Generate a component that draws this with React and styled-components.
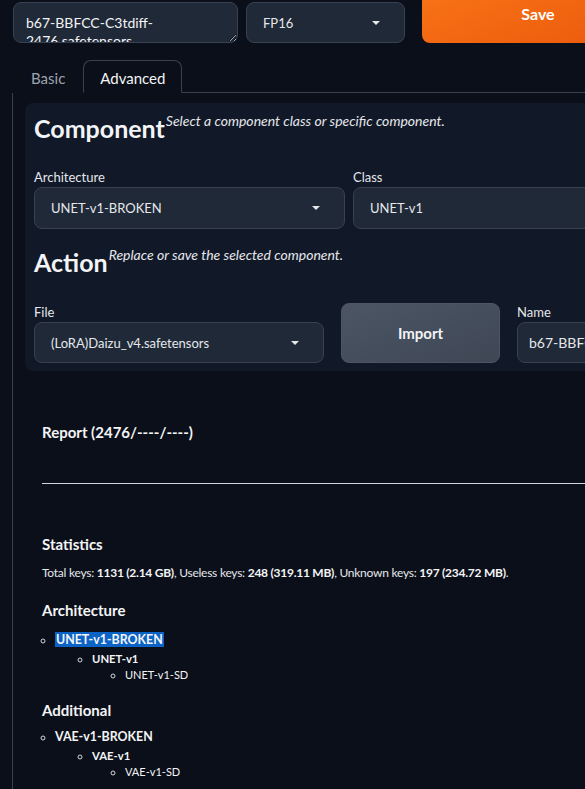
import React from 'react';
import styled, { createGlobalStyle } from 'styled-components';

const GlobalStyle = createGlobalStyle`
  html, body {
    margin: 0;
    padding: 0;
    background: #0b0f19;
    overflow: hidden;
  }
  body {
    font-family: Lato, "Noto Sans", sans-serif;
    color: #f3f4f6;
  }
`;

const Page = styled.div`
  width: 720px;
  padding-top: 2px;
`;

const TopRow = styled.div`
  display: flex;
  align-items: flex-start;
  padding-left: 13px;
`;

const NameArea = styled.textarea`
  box-sizing: border-box;
  width: 225px;
  height: 41px;
  margin: 0 8px 0 0;
  padding: 11px 12px 0 12px;
  background: #1f2937;
  border: 1px solid #374151;
  border-radius: 8px;
  color: #f3f4f6;
  font-family: inherit;
  font-size: 14px;
  line-height: 18px;
  overflow: hidden;
  resize: vertical;
  outline: none;
`;

const Select = styled.div`
  box-sizing: border-box;
  display: flex;
  align-items: center;
  justify-content: space-between;
  flex: none;
  width: ${(p) => (p.$w ? `${p.$w}px` : '100%')};
  height: ${(p) => p.$h || 42}px;
  padding: 0 ${(p) => (p.$caret ? 24 : 16)}px 0 ${(p) => (p.$text ? 11 : 16)}px;
  background: #1f2937;
  border: 1px solid #374151;
  border-radius: 8px;
  color: #e5e7eb;
  font-size: ${(p) => (p.$text ? 14 : 13)}px;
  white-space: nowrap;
  overflow: hidden;
`;

const Caret = () => (
  <svg width="8" height="4" viewBox="0 0 8 4">
    <path d="M0 0 H8 L4 4 Z" fill="#e5e7eb" />
  </svg>
);

const SaveButton = styled.button`
  flex: none;
  width: 232px;
  height: 51px;
  margin: -10px 0 0 17px;
  padding: 0 0 8px 0;
  border: none;
  border-radius: 8px;
  background: linear-gradient(160deg, #f97316, #ea580c);
  color: #fff;
  font-family: inherit;
  font-size: 16px;
  font-weight: 700;
`;

const TabBar = styled.div`
  display: flex;
  margin: 17px 0 0 12px;
  border-bottom: 1px solid #374151;
`;

const Tab = styled.div`
  box-sizing: border-box;
  height: 33px;
  padding: 2px ${(p) => (p.$active ? 16 : 17)}px 0 ${(p) => (p.$active ? 16 : 18)}px;
  display: flex;
  align-items: center;
  font-size: 15px;
  color: ${(p) => (p.$active ? '#f3f4f6' : '#9ca3af')};
  border: 1px solid ${(p) => (p.$active ? '#374151' : 'transparent')};
  border-bottom-color: ${(p) => (p.$active ? '#0b0f19' : 'transparent')};
  border-radius: 8px 8px 0 0;
  margin-bottom: -1px;
  background: #0b0f19;
`;

const TabPanel = styled.div`
  margin-left: 12px;
  border-left: 1px solid #374151;
  padding: 10px 0 40px 12px;
`;

const Group = styled.div`
  background: #111827;
  border-radius: 8px;
  padding: 7px 9px 8px 9px;
`;

const Heading = styled.div`
  display: flex;
  align-items: flex-start;
  margin-top: ${(p) => p.$mt || 0}px;
`;

const HeadingText = styled.span`
  font-size: 25px;
  font-weight: 700;
  line-height: 36px;
`;

const Note = styled.span`
  margin: 1px 0 0 1px;
  font-size: 14px;
  line-height: 20px;
  font-style: italic;
  color: #e5e7eb;
`;

const FieldRow = styled.div`
  display: flex;
  align-items: flex-start;
  margin-top: ${(p) => p.$mt || 0}px;
`;

const Field = styled.div`
  display: flex;
  flex-direction: column;
  width: ${(p) => (p.$w ? `${p.$w}px` : 'auto')};
  flex: ${(p) => (p.$w ? 'none' : '1')};
  min-width: 0;
  margin-right: ${(p) => p.$mr || 0}px;
`;

const Label = styled.div`
  font-size: 13px;
  line-height: 18px;
  color: #e5e7eb;
  margin-bottom: 1px;
`;

const ImportButton = styled.button`
  flex: none;
  width: 159px;
  height: 60px;
  margin-right: 17px;
  border: 1px solid #4b5563;
  border-radius: 8px;
  background: linear-gradient(160deg, #4b5563, #3f4755);
  color: #f3f4f6;
  font-family: inherit;
  font-size: 15px;
  font-weight: 700;
`;

const Report = styled.div`
  padding-left: 17px;
  margin-top: 51px;
`;

const Title = styled.div`
  font-size: 15px;
  font-weight: 700;
  line-height: 20px;
  margin-top: ${(p) => p.$mt || 0}px;
`;

const Rule = styled.hr`
  border: none;
  border-top: 1px solid #d1d5db;
  margin: 41px 0 0 0;
`;

const Stats = styled.p`
  margin: 9px 0 0 0;
  font-size: 12px;
  letter-spacing: -0.25px;
  line-height: 20px;
  color: #e5e7eb;
  b {
    font-weight: 700;
    color: #f3f4f6;
  }
`;

const Tree = styled.ul`
  margin: ${(p) => p.$mt || 0}px 0 0 0;
  padding-left: ${(p) => p.$indent}px;
  list-style: circle;
  font-size: ${(p) => p.$size}px;
  font-weight: ${(p) => p.$weight || 700};
  line-height: ${(p) => p.$lh}px;
  li::marker {
    font-size: 11px;
    color: #d1d5db;
  }
`;

const Highlight = styled.span`
  background: #0b63c6;
  padding: 0 1px;
`;

const Hierarchy = ({ top, mid, low, selected, mt }) => (
  <Tree $indent={13} $size={12.4} $lh={20} $mt={mt}>
    <li>
      {selected ? <Highlight>{top}</Highlight> : top}
      <Tree $indent={37} $size={11.3} $lh={18}>
        <li>
          {mid}
          <Tree $indent={33} $size={11} $lh={14} $weight={400}>
            <li>{low}</li>
          </Tree>
        </li>
      </Tree>
    </li>
  </Tree>
);

const App = () => {
  return (
    <Page>
      <GlobalStyle />
      <TopRow>
        <NameArea readOnly value="b67-BBFCC-C3tdiff-2476.safetensors" />
        <Select $w={159} $h={41} $caret>
          FP16 <Caret />
        </Select>
        <SaveButton>Save</SaveButton>
      </TopRow>

      <TabBar>
        <Tab>Basic</Tab>
        <Tab $active>Advanced</Tab>
      </TabBar>

      <TabPanel>
        <Group>
          <Heading>
            <HeadingText>Component</HeadingText>
            <Note>Select a component class or specific component.</Note>
          </Heading>
          <FieldRow $mt={22}>
            <Field $w={311} $mr={8}>
              <Label>Architecture</Label>
              <Select $caret>
                UNET-v1-BROKEN <Caret />
              </Select>
            </Field>
            <Field>
              <Label>Class</Label>
              <Select>UNET-v1</Select>
            </Field>
          </FieldRow>

          <Heading $mt={15}>
            <HeadingText>Action</HeadingText>
            <Note>Replace or save the selected component.</Note>
          </Heading>
          <FieldRow $mt={23}>
            <Field $w={290} $mr={17}>
              <Label>File</Label>
              <Select $h={41} $caret>
                (LoRA)Daizu_v4.safetensors <Caret />
              </Select>
            </Field>
            <ImportButton>Import</ImportButton>
            <Field>
              <Label>Name</Label>
              <Select $h={41} $text>
                b67-BBFCC-C3tdiff-2476.safetensors
              </Select>
            </Field>
          </FieldRow>
        </Group>

        <Report>
          <Title>Report (2476/----/----)</Title>
          <Rule />
          <Title $mt={50}>Statistics</Title>
          <Stats>
            Total keys: <b>1131 (2.14 GB)</b>, Useless keys: <b>248 (319.11 MB)</b>, Unknown
            keys: <b>197 (234.72 MB)</b>.
          </Stats>
          <Title $mt={17}>Architecture</Title>
          <Hierarchy top="UNET-v1-BROKEN" mid="UNET-v1" low="UNET-v1-SD" selected mt={10} />
          <Title $mt={18}>Additional</Title>
          <Hierarchy top="VAE-v1-BROKEN" mid="VAE-v1" low="VAE-v1-SD" mt={7} />
        </Report>
      </TabPanel>
    </Page>
  );
};

export default App;
